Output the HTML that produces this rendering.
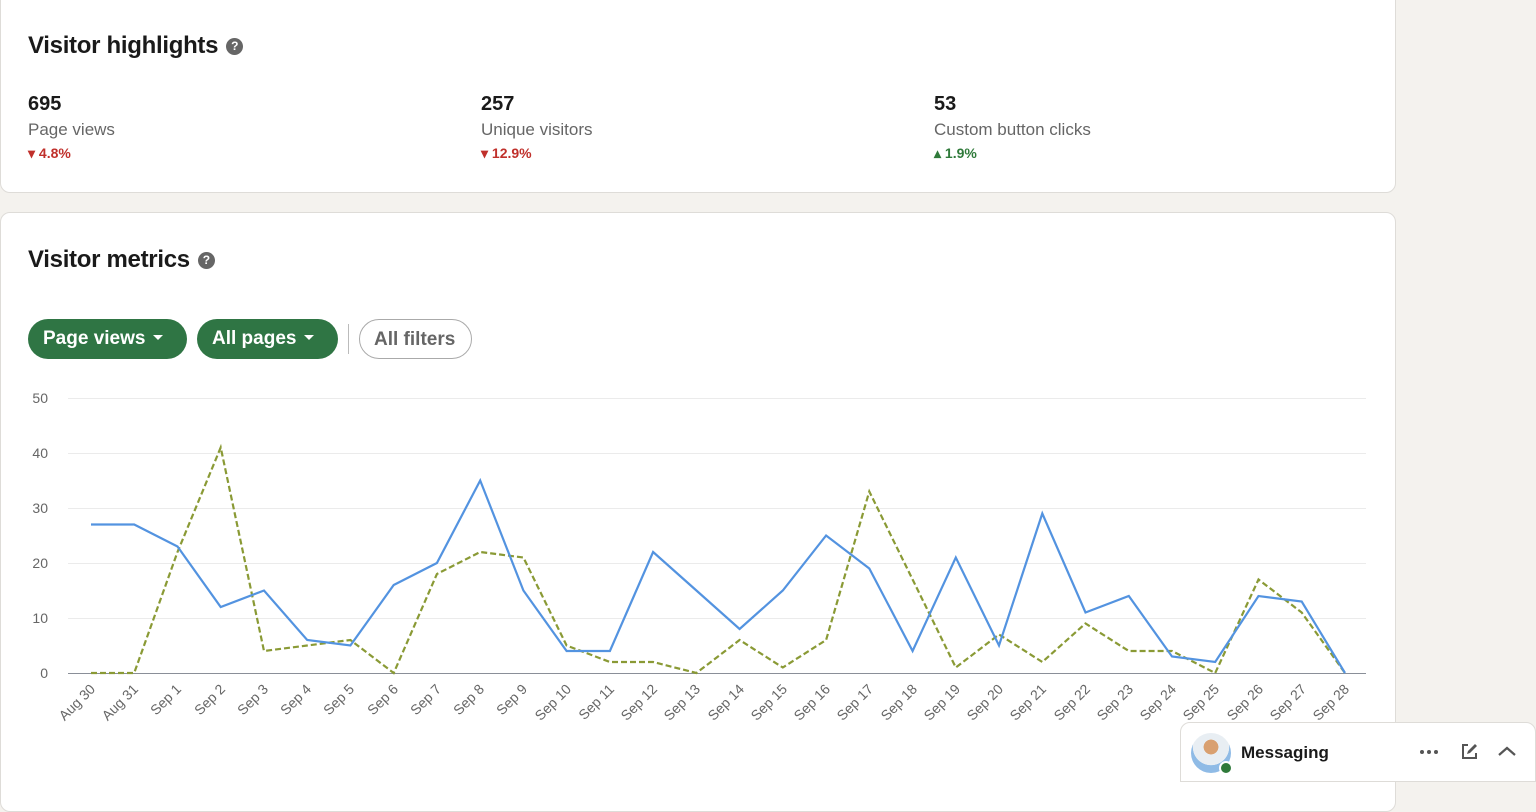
<!DOCTYPE html><html><head><style>
body{margin:0;width:1536px;height:775px;background:#f4f2ee;font-family:"Liberation Sans",sans-serif;overflow:hidden;position:relative;color:#1a1a1a}
.card{position:absolute;left:0;width:1396px;background:#fff;border:1px solid #dedcd8;border-radius:10px;box-sizing:border-box}
h2{position:absolute;left:28px;margin:0;font-size:24px;font-weight:bold;letter-spacing:-0.3px}
.q{display:inline-block;width:17px;height:17px;border-radius:50%;background:#666;color:#fff;font-size:12px;text-align:center;line-height:17px;vertical-align:3px;margin-left:8px}
.stat{position:absolute;top:93px}
.num{font-size:20px;font-weight:bold}
.lab{font-size:17px;color:#666;margin-top:4px}
.ch{font-size:14px;font-weight:bold;margin-top:5px}
.dn{color:#c0302b}.up{color:#2f7a3a}
.pill{position:absolute;top:319px;height:40px;border-radius:20px;box-sizing:border-box;font-size:19px;font-weight:bold;line-height:40px;padding:0 15px;white-space:nowrap}
.g{background:#2f7544;color:#fff}
.car{display:inline-block;width:0;height:0;border-left:5px solid transparent;border-right:5px solid transparent;border-top:5px solid #fff;vertical-align:4px;margin-left:8px}
.msg{position:absolute;left:1180px;top:722px;width:356px;height:60px;background:#fff;border:1px solid #dedcd8;border-radius:10px 10px 0 0;box-sizing:border-box}
</style></head><body>
<div class="card" style="top:-10px;height:203px"></div>
<h2 style="top:32px">Visitor highlights<span class="q">?</span></h2>
<div class="stat" style="left:28px"><div class="num">695</div><div class="lab">Page views</div><div class="ch dn">▾ 4.8%</div></div>
<div class="stat" style="left:481px"><div class="num">257</div><div class="lab">Unique visitors</div><div class="ch dn">▾ 12.9%</div></div>
<div class="stat" style="left:934px"><div class="num">53</div><div class="lab">Custom button clicks</div><div class="ch up">▴ 1.9%</div></div>
<div class="card" style="top:212px;height:600px"></div>
<h2 style="top:246px">Visitor metrics<span class="q">?</span></h2>
<div class="pill g" style="left:28px;width:159px">Page views<span class="car"></span></div>
<div class="pill g" style="left:197px;width:141px">All pages<span class="car"></span></div>
<div style="position:absolute;left:348px;top:324px;width:1px;height:30px;background:#bbb"></div>
<div class="pill" style="left:359px;width:113px;border:1px solid #aaa;color:#666;padding:0 14px">All filters</div>
<svg style="position:absolute;left:0;top:0" width="1536" height="775">
<g stroke="#ebebeb" stroke-width="1"><line x1="68" x2="1366" y1="398.5" y2="398.5"/><line x1="68" x2="1366" y1="453.5" y2="453.5"/><line x1="68" x2="1366" y1="508.5" y2="508.5"/><line x1="68" x2="1366" y1="563.5" y2="563.5"/><line x1="68" x2="1366" y1="618.5" y2="618.5"/></g>
<line x1="68" x2="1366" y1="673.5" y2="673.5" stroke="#8a8f98"/>
<g font-size="14" fill="#666" text-anchor="end"><text x="48" y="403">50</text><text x="48" y="458">40</text><text x="48" y="513">30</text><text x="48" y="568">20</text><text x="48" y="623">10</text><text x="48" y="678">0</text></g>
<polyline fill="none" stroke="#8a9a35" stroke-width="2.2" stroke-dasharray="6,3" points="91,673 134.2,673 177.5,552 220.7,447.5 264,651 307.2,645.5 350.4,640 393.7,673 436.9,574 480.2,552 523.4,557.5 566.6,645.5 609.9,662 653.1,662 696.4,673 739.6,640 782.8,667.5 826.1,640 869.3,491.5 912.6,579.5 955.8,667.5 999,634.5 1042.3,662 1085.5,623.5 1128.8,651 1172,651 1215.2,673 1258.5,579.5 1301.7,612.5 1345,673"/>
<polyline fill="none" stroke="#5393e0" stroke-width="2.2" points="91,524.5 134.2,524.5 177.5,546.5 220.7,607 264,590.5 307.2,640 350.4,645.5 393.7,585 436.9,563 480.2,480.5 523.4,590.5 566.6,651 609.9,651 653.1,552 696.4,590.5 739.6,629 782.8,590.5 826.1,535.5 869.3,568.5 912.6,651 955.8,557.5 999,645.5 1042.3,513.5 1085.5,612.5 1128.8,596 1172,656.5 1215.2,662 1258.5,596 1301.7,601.5 1345,673"/>
<g font-size="14" fill="#666" text-anchor="end">
<text x="96" y="690" transform="rotate(-45 96 690)">Aug 30</text>
<text x="139" y="690" transform="rotate(-45 139 690)">Aug 31</text>
<text x="182" y="690" transform="rotate(-45 182 690)">Sep 1</text>
<text x="226" y="690" transform="rotate(-45 226 690)">Sep 2</text>
<text x="269" y="690" transform="rotate(-45 269 690)">Sep 3</text>
<text x="312" y="690" transform="rotate(-45 312 690)">Sep 4</text>
<text x="355" y="690" transform="rotate(-45 355 690)">Sep 5</text>
<text x="399" y="690" transform="rotate(-45 399 690)">Sep 6</text>
<text x="442" y="690" transform="rotate(-45 442 690)">Sep 7</text>
<text x="485" y="690" transform="rotate(-45 485 690)">Sep 8</text>
<text x="528" y="690" transform="rotate(-45 528 690)">Sep 9</text>
<text x="572" y="690" transform="rotate(-45 572 690)">Sep 10</text>
<text x="615" y="690" transform="rotate(-45 615 690)">Sep 11</text>
<text x="658" y="690" transform="rotate(-45 658 690)">Sep 12</text>
<text x="701" y="690" transform="rotate(-45 701 690)">Sep 13</text>
<text x="745" y="690" transform="rotate(-45 745 690)">Sep 14</text>
<text x="788" y="690" transform="rotate(-45 788 690)">Sep 15</text>
<text x="831" y="690" transform="rotate(-45 831 690)">Sep 16</text>
<text x="874" y="690" transform="rotate(-45 874 690)">Sep 17</text>
<text x="918" y="690" transform="rotate(-45 918 690)">Sep 18</text>
<text x="961" y="690" transform="rotate(-45 961 690)">Sep 19</text>
<text x="1004" y="690" transform="rotate(-45 1004 690)">Sep 20</text>
<text x="1047" y="690" transform="rotate(-45 1047 690)">Sep 21</text>
<text x="1091" y="690" transform="rotate(-45 1091 690)">Sep 22</text>
<text x="1134" y="690" transform="rotate(-45 1134 690)">Sep 23</text>
<text x="1177" y="690" transform="rotate(-45 1177 690)">Sep 24</text>
<text x="1220" y="690" transform="rotate(-45 1220 690)">Sep 25</text>
<text x="1264" y="690" transform="rotate(-45 1264 690)">Sep 26</text>
<text x="1307" y="690" transform="rotate(-45 1307 690)">Sep 27</text>
<text x="1350" y="690" transform="rotate(-45 1350 690)">Sep 28</text>
</g></svg>
<div class="msg">
<div style="position:absolute;left:10px;top:10px;width:40px;height:40px;border-radius:50%;background:radial-gradient(circle at 50% 35%,#d9a070 0 22%,#e8eef3 23% 55%,#8fbbe6 56%)"></div>
<div style="position:absolute;left:38px;top:38px;width:10px;height:10px;border-radius:50%;background:#2f7a3a;border:2px solid #fff"></div>
<div style="position:absolute;left:60px;top:20px;font-size:17px;font-weight:bold">Messaging</div>
<svg style="position:absolute;left:238px;top:26px" width="20" height="6"><circle cx="3" cy="3" r="2" fill="#555"/><circle cx="10" cy="3" r="2" fill="#555"/><circle cx="17" cy="3" r="2" fill="#555"/></svg>
<svg style="position:absolute;left:278px;top:19px" width="20" height="20" viewBox="0 0 20 20"><path d="M9 3H4v13h13v-5" fill="none" stroke="#555" stroke-width="2"/><path d="M8 12l1-3 7-7 2 2-7 7z" fill="#555"/></svg>
<svg style="position:absolute;left:316px;top:21px" width="20" height="14" viewBox="0 0 20 14"><path d="M2 11l8-7 8 7" fill="none" stroke="#555" stroke-width="2.2"/></svg>
</div>
</body></html>
